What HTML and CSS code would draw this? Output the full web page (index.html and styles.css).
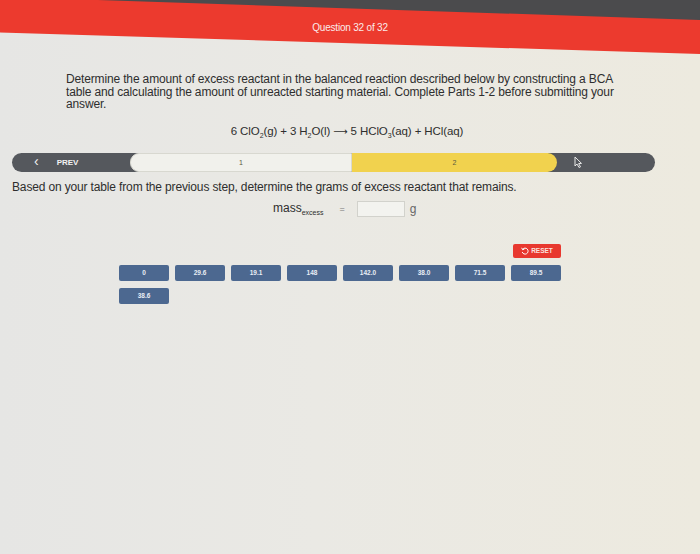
FILE: index.html
```html
<!DOCTYPE html>
<html>
<head>
<meta charset="utf-8">
<link rel="stylesheet" href="styles.css">
</head>
<body>
<div class="page">
  <header class="top"><span class="qnum">Question 32 of 32</span></header>
  <main class="content">
    <p class="prompt">Determine the amount of excess reactant in the balanced reaction described below by constructing a BCA table and calculating the amount of unreacted starting material. Complete Parts 1-2 before submitting your answer.</p>
    <p class="equation">6 ClO<sub>2</sub>(g) + 3 H<sub>2</sub>O(l) <span class="arrow">&#x27F6;</span> 5 HClO<sub>3</sub>(aq) + HCl(aq)</p>
    <div class="progress">
      <div class="prev"><span class="chev">&#x2039;</span><span class="prev-label">PREV</span></div>
      <div class="step step1">1</div>
      <div class="step step2">2</div>
      <div class="next">
        <svg class="cursor" width="10" height="12" viewBox="0 0 10 12"><path d="M2 1 L2 10 L4 8 L6 11.5 L7.5 10.8 L5.6 7.6 L8.5 7.4 Z" fill="none" stroke="#e8e8e8" stroke-width="1"/></svg>
      </div>
    </div>
    <p class="instr">Based on your table from the previous step, determine the grams of excess reactant that remains.</p>
    <div class="mass">
      <span class="mass-label">mass<sub>excess</sub></span>
      <span class="eq">=</span>
      <span class="input"></span>
      <span class="unit">g</span>
    </div>
    <div class="tiles">
      <div class="reset-row"><button class="reset"><svg width="8" height="8" viewBox="0 0 8 8"><path d="M1.6 2.4 A3 3 0 1 1 1.2 5" fill="none" stroke="#fff" stroke-width="1"/><path d="M0.6 0.8 L1.8 2.8 L3.6 1.8" fill="none" stroke="#fff" stroke-width="1"/></svg>RESET</button></div>
      <div class="grid">
        <button class="tile">0</button>
        <button class="tile">29.6</button>
        <button class="tile">19.1</button>
        <button class="tile">148</button>
        <button class="tile">142.0</button>
        <button class="tile">38.0</button>
        <button class="tile">71.5</button>
        <button class="tile">89.5</button>
        <button class="tile">38.6</button>
      </div>
    </div>
  </main>
</div>
</body>
</html>
```
FILE: styles.css
```css
html, body {
  margin: 0;
  padding: 0;
}
body {
  width: 700px;
  height: 554px;
  overflow: hidden;
  font-family: "Liberation Sans", Arial, sans-serif;
  color: #2e2e2e;
  background: linear-gradient(90deg, #e6e6e4 0%, #eae9e4 45%, #edeadf 100%);
}
.page {
  width: 700px;
  height: 554px;
  position: relative;
}
.top {
  position: relative;
  height: 54px;
  background: #ec3a2e;
  clip-path: polygon(0 0, 100% 0, 100% 100%, 0 60%);
  display: flex;
  justify-content: center;
}
.top::before {
  content: "";
  position: absolute;
  inset: 0;
  background: #4b4b4d;
  clip-path: polygon(14% 0, 100% 0, 100% 20px);
}
.qnum {
  margin-top: 22px;
  font-size: 10px;
  color: #fbeaea;
  letter-spacing: -0.2px;
}
.content {
  display: flex;
  flex-direction: column;
}
.prompt {
  margin: 19px 0 0 66px;
  width: 560px;
  font-size: 12px;
  line-height: 12.5px;
  letter-spacing: -0.15px;
}
.equation {
  margin: 13px 0 0 0;
  text-align: center;
  padding-right: 6px;
  font-size: 11.5px;
  line-height: 14px;
  letter-spacing: -0.1px;
}
.equation sub {
  font-size: 7px;
}
.arrow {
  font-family: "DejaVu Sans", sans-serif;
  font-size: 10px;
}
.progress {
  margin: 10px 0 0 12px;
  width: 643px;
  height: 19px;
  background: #55585d;
  border-radius: 10px;
  display: flex;
  align-items: stretch;
}
.prev {
  width: 118px;
  display: flex;
  align-items: center;
  color: #f2f2f2;
}
.chev {
  margin-left: 22px;
  font-size: 14px;
  line-height: 1;
  margin-top: -3px;
}
.prev-label {
  margin-left: 18px;
  font-size: 8px;
  font-weight: bold;
}
.step {
  display: flex;
  align-items: center;
  justify-content: center;
  font-size: 7px;
  color: #5a5a40;
}
.step1 {
  width: 222px;
  background: #f1f1ec;
  border: 1px solid #d8d8d0;
  box-sizing: border-box;
  border-radius: 9px 0 0 9px;
}
.step2 {
  width: 205px;
  background: #f1d24e;
  border-radius: 0 10px 10px 0;
}
.next {
  flex: 1;
  display: flex;
  align-items: center;
  padding-left: 16px;
}
.instr {
  margin: 8px 0 0 12px;
  font-size: 12px;
  line-height: 14px;
  letter-spacing: -0.15px;
}
.mass {
  margin: 6px 0 0 273px;
  display: flex;
  align-items: center;
  height: 18px;
}
.mass-label {
  font-size: 12px;
}
.mass-label sub {
  font-size: 7px;
}
.eq {
  margin-left: 16px;
  font-size: 9px;
  color: #777;
}
.input {
  margin-left: 12px;
  width: 48px;
  height: 16px;
  box-sizing: border-box;
  border: 1px solid #d2d2cc;
  background: #f3f3ef;
}
.unit {
  margin-left: 5px;
  font-size: 12px;
  color: #666;
}
.tiles {
  margin: 26px 0 0 119px;
  width: 442px;
  display: flex;
  flex-direction: column;
}
.reset-row {
  display: flex;
  justify-content: flex-end;
}
.reset {
  width: 48px;
  height: 14px;
  background: #e8382f;
  border: none;
  border-radius: 2px;
  color: #fbe0de;
  font-family: "Liberation Sans", Arial, sans-serif;
  font-size: 6.5px;
  font-weight: bold;
  display: flex;
  align-items: center;
  justify-content: center;
  gap: 2px;
  padding: 0;
}
.grid {
  margin-top: 7px;
  display: grid;
  grid-template-columns: repeat(8, 1fr);
  column-gap: 6px;
  row-gap: 7px;
}
.tile {
  height: 16px;
  background: #4c6890;
  border: none;
  border-radius: 2px;
  color: #e9eef5;
  font-family: "Liberation Sans", Arial, sans-serif;
  font-size: 6.5px;
  font-weight: bold;
  padding: 0;
}
```
